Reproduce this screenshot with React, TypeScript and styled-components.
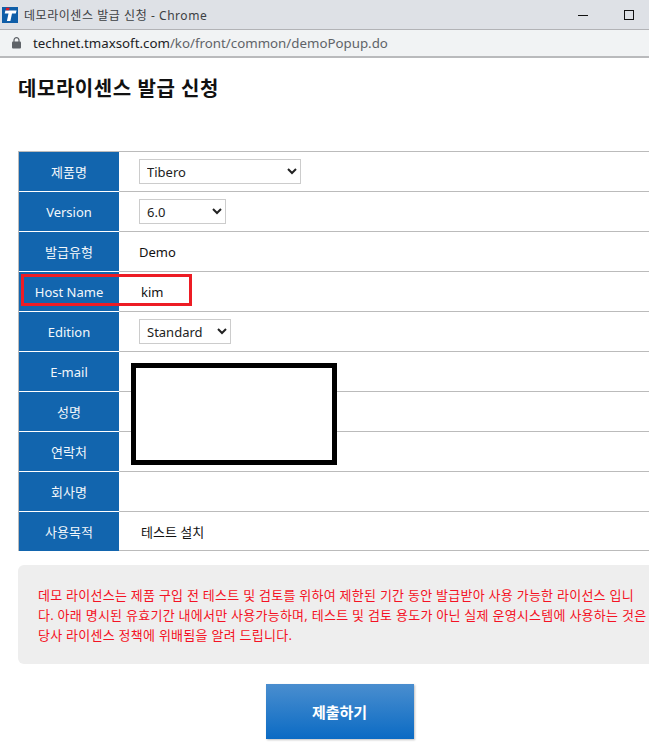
import styled, { createGlobalStyle } from "styled-components";

const GlobalStyle = createGlobalStyle`
  html, body {
    margin: 0;
    padding: 0;
    background: #fff;
    overflow: hidden;
  }
  body {
    font-family: "Noto Sans", "Noto Sans CJK KR", sans-serif;
  }
`;

const Page = styled.div`
  width: 649px;
  height: 756px;
  overflow: hidden;
  display: flex;
  flex-direction: column;
`;

const Titlebar = styled.div`
  width: 652px;
  height: 30px;
  flex: none;
  background: #dee1e6;
  border-bottom: 1px solid #b2b3b6;
  display: flex;
  align-items: center;
  padding-left: 2px;
  box-sizing: border-box;
`;

const WindowTitle = styled.span`
  flex: 1;
  margin-left: 6px;
  font-size: 12px;
  letter-spacing: 0.55px;
  color: #3c4043;
`;

const WindowButton = styled.div`
  width: 46px;
  height: 29px;
  display: flex;
  align-items: center;
  justify-content: center;
`;

const Addressbar = styled.div`
  height: 26px;
  flex: none;
  background: #f1f3f4;
  border-bottom: 2px solid #b9babc;
  display: flex;
  align-items: center;
  padding-left: 12px;
`;

const Url = styled.span`
  margin-left: 12px;
  font-size: 13.3px;
  color: #5f6368;
`;

const Host = styled.span`
  color: #202124;
`;

const Content = styled.div`
  flex: 1;
  width: 680px;
  padding: 16px 0 0 18px;
`;

const Heading = styled.h1`
  margin: 0 0 47px;
  font-size: 20px;
  line-height: 30px;
  font-weight: 700;
  letter-spacing: 0.55px;
  color: #111;
`;

const FormTable = styled.div`
  position: relative;
  border-left: 1px solid #bbb;
  margin-bottom: 14px;
`;

const Row = styled.div`
  display: flex;
  height: 40px;
`;

const Label = styled.div<{ $first?: boolean }>`
  width: 100px;
  flex: none;
  box-sizing: border-box;
  border-top: 1px solid ${(p) => (p.$first ? "#bbb" : "#fff")};
  background: #1265ae;
  color: #f2f7fb;
  font-size: 13px;
  display: flex;
  align-items: center;
  justify-content: center;
`;

const Value = styled.div<{ $last?: boolean; $inset?: number }>`
  flex: 1;
  box-sizing: border-box;
  border-top: 1px solid #bbb;
  border-bottom: ${(p) => (p.$last ? "1px solid #bbb" : "0")};
  padding-left: ${(p) => p.$inset ?? 20}px;
  font-size: 13px;
  color: #111;
  display: flex;
  align-items: center;
`;

const Select = styled.select<{ $width: number }>`
  width: ${(p) => p.$width}px;
  height: 25px;
  box-sizing: border-box;
  background: #fff;
  border: 1px solid #ccc;
  padding-left: 3px;
  font-family: inherit;
  font-size: 13px;
  color: #222;
  border-radius: 0;
  outline: none;
`;

const Highlight = styled.div`
  position: absolute;
  left: 2px;
  top: 123px;
  width: 171px;
  height: 32px;
  box-sizing: border-box;
  border: 3px solid #ed1c24;
`;

const Redaction = styled.div`
  position: absolute;
  left: 112px;
  top: 212px;
  width: 206px;
  height: 102px;
  box-sizing: border-box;
  background: #fff;
  border: 5px solid #000;
`;

const Notice = styled.div`
  height: 99px;
  box-sizing: border-box;
  background: #eee;
  border-radius: 6px;
  padding: 20px 0 0 20px;
  color: #f41224;
  font-size: 13px;
  letter-spacing: 0.26px;
  line-height: 20px;
  white-space: nowrap;
`;

const Actions = styled.div`
  width: 643px;
  display: flex;
  justify-content: center;
  margin-top: 20px;
`;

const SubmitButton = styled.button`
  width: 148px;
  height: 55px;
  border: 0;
  padding: 0;
  background: linear-gradient(#4a8ecf, #0b6bc4);
  box-shadow: 1px 1px 2px rgba(0, 0, 0, 0.25);
  color: #fff;
  font-family: inherit;
  font-size: 15px;
  font-weight: 700;
`;

function TmaxLogo() {
  return (
    <svg width="16" height="16" viewBox="0 0 16 16">
      <rect width="16" height="16" fill="#0f5ea8" />
      <path d="M3.4 3.4h11.2l-.8 3.2H10l-1.6 7.4H4.9l1.6-7.4H2.7z" fill="#fff" />
      <path d="M4.2 .8h3.4l-.5 2.4H3.7z" fill="#e01b24" />
    </svg>
  );
}

function LockIcon() {
  return (
    <svg width="9" height="12" viewBox="0 0 9 12">
      <path
        d="M2 5V3.2a2.5 2.5 0 0 1 5 0V5"
        fill="none"
        stroke="#5f6368"
        strokeWidth="1.2"
      />
      <rect y="4.6" width="9" height="7" rx="1" fill="#5f6368" />
    </svg>
  );
}

function App() {
  return (
    <Page>
      <GlobalStyle />
      <Titlebar>
        <TmaxLogo />
        <WindowTitle>데모라이센스 발급 신청 - Chrome</WindowTitle>
        <WindowButton>
          <svg width="10" height="10" viewBox="0 0 10 10">
            <path d="M0 5.5h10" stroke="#111" strokeWidth="1" />
          </svg>
        </WindowButton>
        <WindowButton>
          <svg width="10" height="10" viewBox="0 0 10 10">
            <rect x=".5" y=".5" width="9" height="9" fill="none" stroke="#111" />
          </svg>
        </WindowButton>
      </Titlebar>
      <Addressbar>
        <LockIcon />
        <Url>
          <Host>technet.tmaxsoft.com</Host>/ko/front/common/demoPopup.do
        </Url>
      </Addressbar>
      <Content>
        <Heading>데모라이센스 발급 신청</Heading>
        <FormTable>
          <Row>
            <Label $first>제품명</Label>
            <Value>
              <Select $width={162} defaultValue="Tibero">
                <option>Tibero</option>
              </Select>
            </Value>
          </Row>
          <Row>
            <Label>Version</Label>
            <Value>
              <Select $width={87} defaultValue="6.0">
                <option>6.0</option>
              </Select>
            </Value>
          </Row>
          <Row>
            <Label>발급유형</Label>
            <Value>Demo</Value>
          </Row>
          <Row>
            <Label>Host Name</Label>
            <Value $inset={22}>kim</Value>
          </Row>
          <Row>
            <Label>Edition</Label>
            <Value>
              <Select $width={92} defaultValue="Standard">
                <option>Standard</option>
              </Select>
            </Value>
          </Row>
          <Row>
            <Label>E-mail</Label>
            <Value />
          </Row>
          <Row>
            <Label>성명</Label>
            <Value />
          </Row>
          <Row>
            <Label>연락처</Label>
            <Value />
          </Row>
          <Row>
            <Label>회사명</Label>
            <Value />
          </Row>
          <Row>
            <Label>사용목적</Label>
            <Value $last $inset={22}>
              테스트 설치
            </Value>
          </Row>
          <Highlight />
          <Redaction />
        </FormTable>
        <Notice>
          <div>
            데모 라이선스는 제품 구입 전 테스트 및 검토를 위하여 제한된 기간 동안 발급받아 사용 가능한 라이선스 입니
          </div>
          <div>
            다. 아래 명시된 유효기간 내에서만 사용가능하며, 테스트 및 검토 용도가 아닌 실제 운영시스템에 사용하는 것은
          </div>
          <div>당사 라이센스 정책에 위배됨을 알려 드립니다.</div>
        </Notice>
        <Actions>
          <SubmitButton>제출하기</SubmitButton>
        </Actions>
      </Content>
    </Page>
  );
}

export default App;
